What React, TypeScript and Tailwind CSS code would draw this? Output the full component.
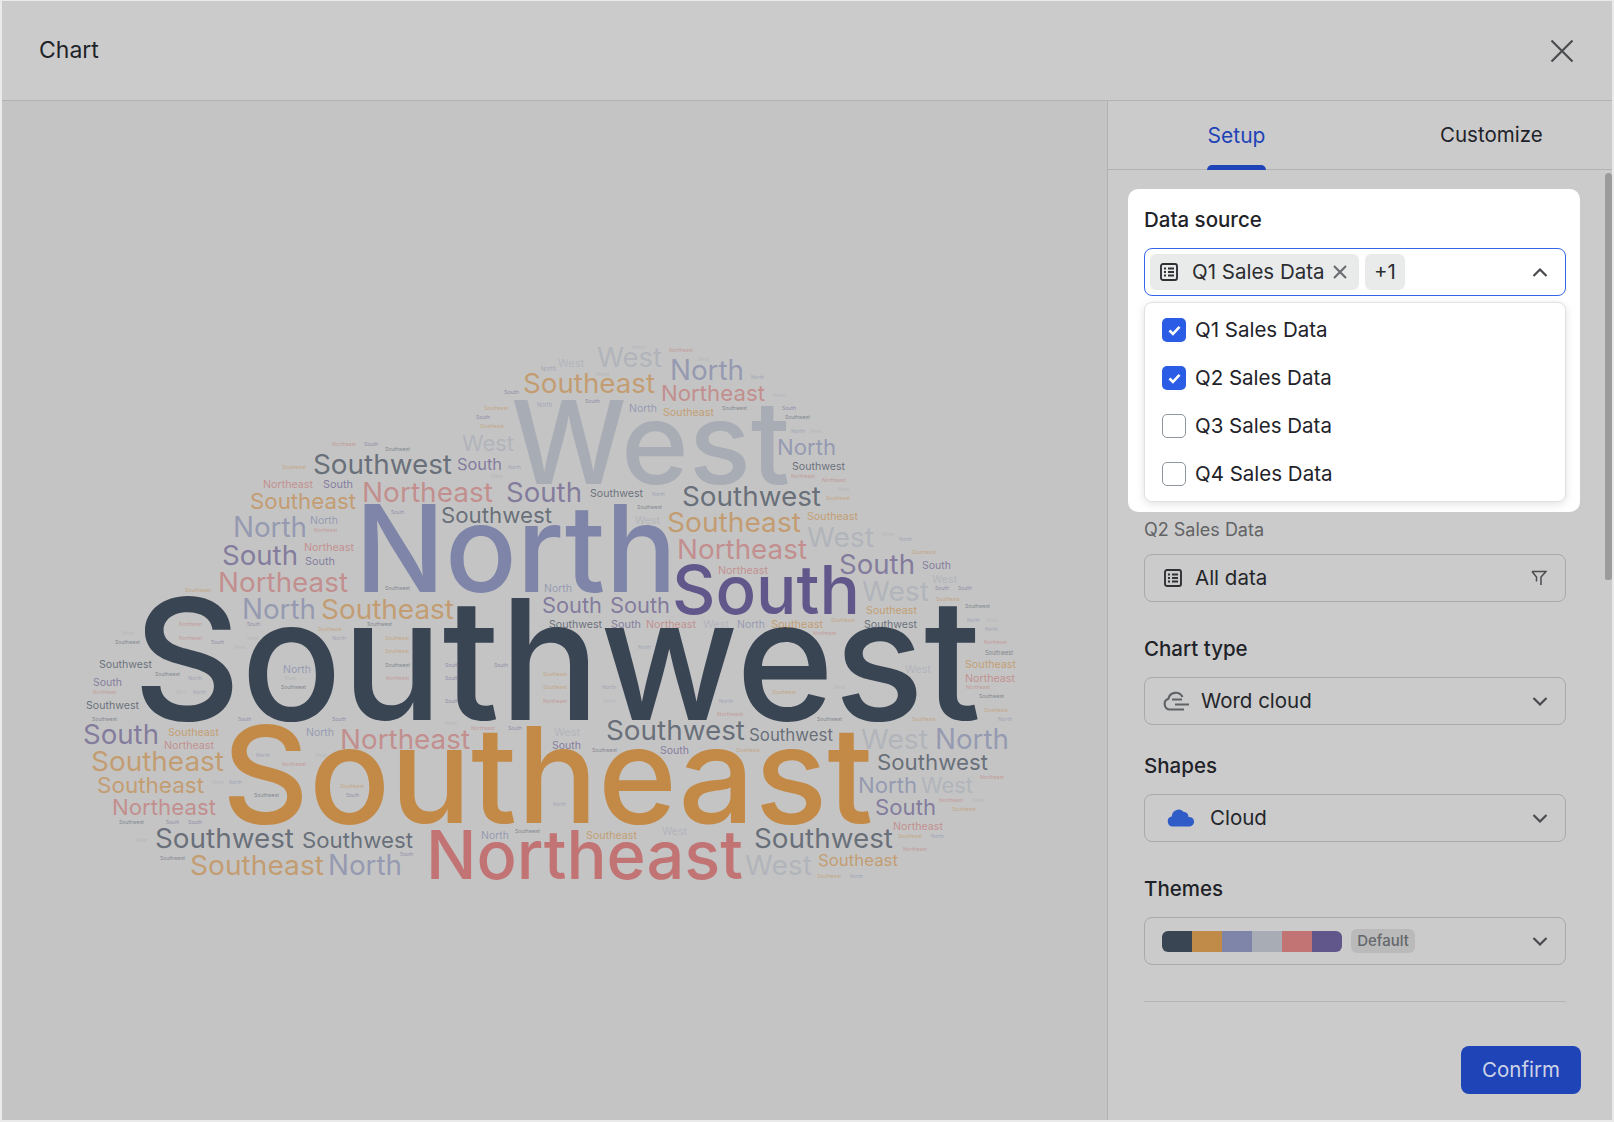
const WORD_COLORS: Record<string, string> = {
  Southwest: "#3a4554",
  Southeast: "#c38a47",
  North: "#7e85a8",
  West: "#a8adb5",
  Northeast: "#c17473",
  South: "#62578a",
};

// em widths of each word, used to get the font size from the measured width
const WORD_RATIO: Record<string, number> = {
  Southwest: 5.05,
  Southeast: 4.87,
  North: 2.67,
  West: 2.43,
  Northeast: 4.74,
  South: 2.78,
};

const WORDS: [string, number, number, number][] = [
  ["Southwest", 133, 720, 848],
  ["Southeast", 222, 823, 651],
  ["Northeast", 426, 879, 317],
  ["North", 355, 592, 322],
  ["West", 511, 484, 279],
  ["South", 672, 614, 188],
  ["North", 541, 371, 15],
  ["Southeast", 523, 393, 132],
  ["South", 504, 394, 15],
  ["North", 537, 407, 15],
  ["Southeast", 484, 410, 24],
  ["South", 476, 419, 14],
  ["Southeast", 480, 428, 24],
  ["Northeast", 332, 446, 24],
  ["South", 364, 446, 14],
  ["Southwest", 385, 451, 25],
  ["West", 462, 451, 52],
  ["Southwest", 313, 474, 139],
  ["South", 457, 470, 45],
  ["North", 508, 469, 13],
  ["Southeast", 282, 469, 24],
  ["West", 491, 478, 12],
  ["Northeast", 263, 488, 50],
  ["South", 323, 488, 30],
  ["Northeast", 362, 502, 131],
  ["South", 506, 502, 76],
  ["Southeast", 250, 509, 106],
  ["South", 391, 514, 13],
  ["Southwest", 441, 523, 111],
  ["North", 233, 537, 74],
  ["North", 310, 524, 28],
  ["Northeast", 314, 532, 23],
  ["Northeast", 304, 551, 50],
  ["South", 222, 565, 76],
  ["South", 305, 565, 30],
  ["Northeast", 218, 592, 130],
  ["Southeast", 185, 592, 26],
  ["Southwest", 385, 590, 25],
  ["North", 544, 592, 28],
  ["Southeast", 321, 619, 133],
  ["North", 242, 619, 74],
  ["South", 542, 613, 60],
  ["South", 610, 613, 60],
  ["Southwest", 549, 628, 53],
  ["South", 611, 628, 30],
  ["Northeast", 646, 628, 50],
  ["West", 703, 628, 26],
  ["North", 737, 628, 28],
  ["Southeast", 771, 628, 52],
  ["Southwest", 864, 628, 53],
  ["Southeast", 831, 622, 24],
  ["Northeast", 813, 635, 23],
  ["West", 597, 367, 65],
  ["West", 558, 367, 26],
  ["West", 632, 349, 13],
  ["Northeast", 669, 352, 24],
  ["West", 697, 361, 12],
  ["North", 670, 380, 74],
  ["North", 751, 379, 13],
  ["West", 596, 376, 13],
  ["Northeast", 661, 401, 104],
  ["West", 773, 397, 13],
  ["South", 585, 403, 15],
  ["North", 629, 412, 28],
  ["Southeast", 663, 416, 51],
  ["Southwest", 722, 410, 25],
  ["South", 782, 410, 14],
  ["Southwest", 785, 419, 25],
  ["North", 791, 433, 14],
  ["West", 810, 433, 12],
  ["North", 777, 455, 59],
  ["Southwest", 792, 470, 53],
  ["Northeast", 791, 478, 24],
  ["Northeast", 822, 482, 24],
  ["West", 837, 491, 12],
  ["Southeast", 826, 500, 24],
  ["Southwest", 590, 497, 53],
  ["North", 652, 496, 13],
  ["Southwest", 682, 506, 139],
  ["Southwest", 637, 509, 25],
  ["West", 635, 524, 25],
  ["Southeast", 667, 532, 134],
  ["Southeast", 807, 520, 51],
  ["West", 807, 547, 67],
  ["West", 882, 536, 12],
  ["North", 899, 541, 13],
  ["Northeast", 677, 559, 130],
  ["Southeast", 912, 554, 24],
  ["Northeast", 718, 574, 50],
  ["South", 839, 574, 76],
  ["South", 922, 569, 29],
  ["West", 862, 601, 67],
  ["West", 932, 583, 25],
  ["South", 935, 590, 14],
  ["South", 958, 590, 14],
  ["Southeast", 936, 601, 24],
  ["Southeast", 866, 614, 51],
  ["Southwest", 965, 608, 25],
  ["North", 967, 622, 13],
  ["West", 986, 622, 11],
  ["North", 985, 631, 13],
  ["Northeast", 179, 626, 23],
  ["South", 247, 626, 13],
  ["Southwest", 367, 626, 25],
  ["West", 122, 635, 12],
  ["Southeast", 318, 631, 24],
  ["Northeast", 179, 640, 23],
  ["West", 247, 640, 12],
  ["North", 332, 640, 14],
  ["Southeast", 385, 640, 24],
  ["Southwest", 115, 644, 25],
  ["South", 211, 644, 13],
  ["West", 234, 649, 12],
  ["Southeast", 385, 653, 24],
  ["Southwest", 99, 668, 53],
  ["Southwest", 385, 667, 25],
  ["South", 445, 667, 14],
  ["South", 494, 667, 14],
  ["Southeast", 543, 676, 24],
  ["Southeast", 543, 689, 24],
  ["Northeast", 543, 703, 24],
  ["North", 283, 673, 28],
  ["West", 284, 680, 12],
  ["Southwest", 155, 676, 25],
  ["North", 188, 680, 14],
  ["South", 445, 680, 14],
  ["Northeast", 386, 680, 23],
  ["South", 93, 686, 29],
  ["Southwest", 281, 689, 25],
  ["Northeast", 93, 694, 23],
  ["West", 176, 694, 11],
  ["North", 193, 694, 13],
  ["South", 445, 703, 14],
  ["Southwest", 86, 709, 53],
  ["Southwest", 92, 721, 25],
  ["South", 238, 721, 13],
  ["South", 332, 721, 14],
  ["West", 445, 725, 12],
  ["South", 83, 744, 76],
  ["Southeast", 168, 736, 51],
  ["North", 306, 736, 28],
  ["Northeast", 340, 749, 130],
  ["Northeast", 471, 730, 24],
  ["South", 508, 730, 14],
  ["Northeast", 164, 749, 50],
  ["Southeast", 91, 771, 133],
  ["North", 256, 757, 14],
  ["West", 315, 757, 12],
  ["Northeast", 282, 766, 24],
  ["Southeast", 97, 793, 107],
  ["West", 212, 784, 12],
  ["North", 229, 784, 13],
  ["Southeast", 340, 788, 24],
  ["Southwest", 254, 797, 25],
  ["South", 346, 797, 13],
  ["Northeast", 112, 815, 104],
  ["Southwest", 119, 824, 25],
  ["South", 166, 824, 13],
  ["South", 188, 824, 14],
  ["Southwest", 155, 848, 139],
  ["Southwest", 302, 848, 111],
  ["West", 135, 842, 12],
  ["North", 481, 839, 28],
  ["Southwest", 515, 833, 25],
  ["Southwest", 160, 860, 25],
  ["South", 400, 856, 13],
  ["Southeast", 190, 875, 134],
  ["North", 328, 875, 74],
  ["North", 638, 649, 13],
  ["North", 602, 689, 14],
  ["West", 603, 703, 13],
  ["North", 719, 703, 14],
  ["Southeast", 772, 694, 24],
  ["West", 833, 689, 12],
  ["Northeast", 717, 716, 26],
  ["Southwest", 817, 721, 25],
  ["Southeast", 912, 721, 24],
  ["Northeast", 984, 644, 23],
  ["Southwest", 985, 655, 28],
  ["Southeast", 965, 668, 51],
  ["Northeast", 965, 682, 50],
  ["West", 905, 673, 26],
  ["Northeast", 966, 689, 24],
  ["Southwest", 979, 698, 25],
  ["Southeast", 984, 712, 24],
  ["North", 998, 721, 14],
  ["Southwest", 606, 740, 139],
  ["Southwest", 749, 741, 84],
  ["West", 554, 736, 26],
  ["South", 552, 749, 29],
  ["Southwest", 592, 752, 25],
  ["South", 660, 754, 29],
  ["Southeast", 736, 752, 24],
  ["West", 861, 749, 67],
  ["North", 935, 749, 74],
  ["Southwest", 877, 770, 111],
  ["Northeast", 980, 779, 24],
  ["North", 858, 793, 59],
  ["West", 921, 793, 52],
  ["South", 875, 815, 61],
  ["Northeast", 939, 802, 24],
  ["West", 972, 802, 12],
  ["Southeast", 952, 811, 24],
  ["North", 553, 806, 13],
  ["Northeast", 893, 830, 50],
  ["Southeast", 898, 838, 24],
  ["North", 931, 838, 13],
  ["Northeast", 903, 851, 24],
  ["Southeast", 586, 839, 51],
  ["West", 662, 835, 25],
  ["Southwest", 754, 848, 139],
  ["West", 745, 875, 67],
  ["Southeast", 818, 866, 80],
  ["Southeast", 817, 878, 24],
  ["North", 850, 878, 13],
];

const THEME_COLORS = ["#3a4554", "#c08a48", "#7e85a8", "#a8adb5", "#c17473", "#62578a"];

function WordCloud() {
  return (
    <svg viewBox="2 101 1105 1019" className="block h-full w-full" fontFamily="Inter, sans-serif">
      {WORDS.map(([word, x, y, width], i) => {
        const size = width / WORD_RATIO[word];
        return (
          <text
            key={i}
            x={x}
            y={y}
            fontSize={size}
            fontWeight={size > 60 ? 500 : 400}
            fill={WORD_COLORS[word]}
            fillOpacity={size > 60 ? 1 : size > 8 ? 0.68 : 0.55}
            textLength={width}
            lengthAdjust="spacingAndGlyphs"
          >
            {word}
          </text>
        );
      })}
    </svg>
  );
}

function TableIcon({ className }: { className?: string }) {
  return (
    <svg viewBox="0 0 18 18" fill="none" className={className}>
      <rect x="1" y="1" width="16" height="16" rx="2" stroke="#2f3135" strokeWidth="1.9" />
      <path d="M4 5.5h2M8 5.5h6M4 9h2M8 9h6M4 12.5h2M8 12.5h6" stroke="#2f3135" strokeWidth="1.8" />
    </svg>
  );
}

function Chevron({ up }: { up?: boolean }) {
  return (
    <svg viewBox="0 0 16 9" fill="none" className="h-[9px] w-4 shrink-0">
      <path d={up ? "M1.5 8 8 1.5 14.5 8" : "M1.5 1 8 7.5 14.5 1"} stroke="#4b4c4f" strokeWidth="2.2" />
    </svg>
  );
}

function Label({ children }: { children: string }) {
  return <div className="h-7 text-[20.5px] leading-7 font-medium text-[#1f2329]">{children}</div>;
}

function Select({ children, className }: { children: React.ReactNode; className: string }) {
  return (
    <div className={`flex h-12 items-center rounded-lg border border-[#a9a9ac] pr-[17px] text-[20.5px] text-[#24262a] ${className}`}>
      {children}
    </div>
  );
}

function CheckRow({ label, checked }: { label: string; checked: boolean }) {
  return (
    <div className="flex h-12 items-center gap-[9px] pl-[17px] text-[20.5px] text-[#1f2329]">
      {checked ? (
        <span className="flex h-6 w-6 items-center justify-center rounded-[5px] bg-[#2b5ce6]">
          <svg viewBox="0 0 14 12" fill="none" className="h-[11px] w-[13px]">
            <path d="M1.5 6 5.3 9.8 12.5 2" stroke="white" strokeWidth="2.8" />
          </svg>
        </span>
      ) : (
        <span className="h-6 w-6 rounded-[5px] border border-[#8f959e] bg-white" />
      )}
      {label}
    </div>
  );
}

export default function App() {
  return (
    <div className="h-[1122px] w-[1614px] bg-[#eaeaea] pt-px pr-[2px] pb-[2px] pl-[2px] font-[Inter,sans-serif]">
      <div className="flex h-full w-full flex-col bg-[#cbcbcb]">
        <div className="flex h-[100px] shrink-0 items-center justify-between border-b border-[#b1b1b6] pr-[38px] pl-[37px]">
          <span className="text-[23px] text-[#1f2329]">Chart</span>
          <svg viewBox="0 0 24 24" fill="none" className="h-6 w-6">
            <path d="M1.5 1.5 22.5 22.5M22.5 1.5 1.5 22.5" stroke="#4b4c4f" strokeWidth="2.2" />
          </svg>
        </div>
        <div className="flex min-h-0 flex-1">
          <div className="w-[1105px] shrink-0 bg-[#c4c4c4]">
            <WordCloud />
          </div>
          <div className="relative flex-1 border-l border-[#b1b1b6]">
            <div className="flex h-[69px] border-b border-[#b1b1b6] pt-px text-[20.5px]">
              <div className="relative ml-[99px] flex w-[59px] items-center justify-center text-[21px] text-[#1f44b8]">
                Setup
                <span className="absolute right-0 -bottom-px left-0 h-[5px] rounded-t-md bg-[#1f44b8]" />
              </div>
              <div className="ml-[174px] flex items-center text-[#1f2329]">Customize</div>
            </div>
            <div className="absolute top-[72px] right-0 h-[407px] w-[7px] rounded-t-md rounded-b-sm bg-[#9b9b9b]" />

            <div className="ml-5 mt-[19px] w-[452px] rounded-[10px] bg-white pt-[17px] pr-[14px] pb-[10px] pl-4">
              <Label>Data source</Label>
              <div className="mt-[14px] flex h-12 items-center rounded-lg border border-[#3266e6] pr-[17px] pl-[5px]">
                <div className="flex h-9 w-[209px] items-center rounded-md bg-[#e9ebeb] pl-[10px] text-[20.5px] text-[#2b2d31]">
                  <TableIcon className="h-[18px] w-[18px]" />
                  <span className="ml-[14px]">Q1 Sales Data</span>
                  <svg viewBox="0 0 14 14" fill="none" className="mr-3 ml-auto h-[14px] w-[14px]">
                    <path d="M1 1 13 13M13 1 1 13" stroke="#6b6d70" strokeWidth="2.2" />
                  </svg>
                </div>
                <div className="ml-[6px] flex h-9 w-10 items-center justify-center rounded-md bg-[#e9ebeb] text-[20.5px] text-[#2b2d31]">
                  +1
                </div>
                <div className="ml-auto">
                  <Chevron up />
                </div>
              </div>
              <div className="mt-[6px] h-[200px] rounded-lg border border-[#dfe1e5] bg-white pt-[3px] shadow-[0_2px_8px_rgba(0,0,0,0.12)]">
                <CheckRow label="Q1 Sales Data" checked />
                <CheckRow label="Q2 Sales Data" checked />
                <CheckRow label="Q3 Sales Data" checked={false} />
                <CheckRow label="Q4 Sales Data" checked={false} />
              </div>
            </div>

            <div className="mr-[46px] ml-9 flex flex-col">
              <div className="mt-[6px] h-6 text-[18px] leading-6 text-[#626365]">Q2 Sales Data</div>
              <Select className="mt-[12px] pl-[19px]">
                <TableIcon className="h-[18px] w-[18px]" />
                <span className="ml-[13px]">All data</span>
                <svg viewBox="0 0 16 16" fill="none" className="mr-px ml-auto h-4 w-4">
                  <path d="M1 1.5h14L10 7v8M1 1.5 5.5 7v4.5" stroke="#4b4c4f" strokeWidth="1.5" />
                </svg>
              </Select>

              <div className="mt-[33px]">
                <Label>Chart type</Label>
              </div>
              <Select className="mt-[14px] pl-[18px]">
                <svg viewBox="0 0 26 20" fill="none" className="h-5 w-[26px]">
                  <path
                    d="M21 18.5H7a5.5 5.5 0 0 1-1.6-10.7A7.5 7.5 0 0 1 19.5 6M9 8.5h10M12 13.5h14"
                    stroke="#5f6266"
                    strokeWidth="2.1"
                  />
                </svg>
                <span className="ml-[12px]">Word cloud</span>
                <span className="ml-auto">
                  <Chevron />
                </span>
              </Select>

              <div className="mt-[27px]">
                <Label>Shapes</Label>
              </div>
              <Select className="mt-[14px] pl-[22px]">
                <svg viewBox="0 0 28 18" className="h-[18px] w-[28px]">
                  <path
                    d="M6 17.5a5 5 0 0 1-1.2-9.9A6.8 6.8 0 0 1 16.5 2.8 5.5 5.5 0 0 1 21.5 8 4.8 4.8 0 0 1 23 17.5Z"
                    fill="#2f5cc7"
                  />
                </svg>
                <span className="ml-[15px]">Cloud</span>
                <span className="ml-auto">
                  <Chevron />
                </span>
              </Select>

              <div className="mt-[33px]">
                <Label>Themes</Label>
              </div>
              <Select className="mt-[14px] pl-[17px]">
                <div className="flex h-[21px] overflow-hidden rounded-md">
                  {THEME_COLORS.map((color) => (
                    <span key={color} className="h-full w-[30px]" style={{ backgroundColor: color }} />
                  ))}
                </div>
                <span className="ml-[9px] flex h-6 w-16 items-center justify-center rounded-md bg-[#bababa] text-[15px] font-medium text-[#65686c]">
                  Default
                </span>
                <span className="ml-auto">
                  <Chevron />
                </span>
              </Select>

              <div className="mt-[36px] h-px bg-[#b6b6b6]" />
            </div>

            <div className="mt-[44px] mr-[31px] flex justify-end">
              <div className="flex h-12 w-[120px] items-center justify-center rounded-lg bg-[#1f44b8] text-[20.5px] text-[#cdd3e6]">
                Confirm
              </div>
            </div>
          </div>
        </div>
      </div>
    </div>
  );
}
